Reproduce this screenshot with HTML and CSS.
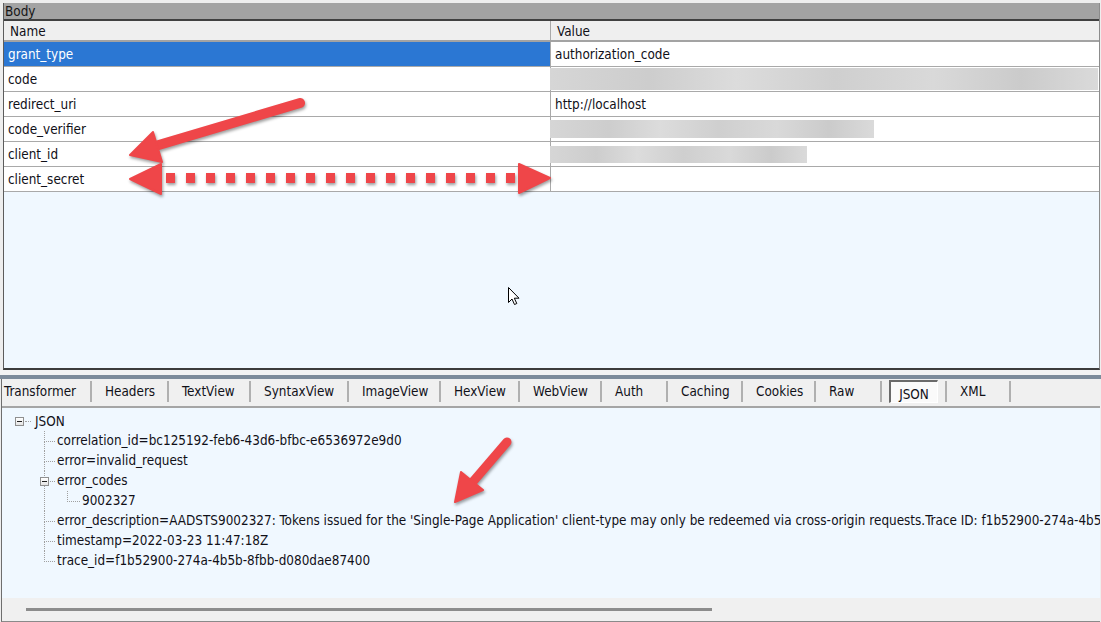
FILE: index.html
```html
<!DOCTYPE html>
<html lang="en">
<head>
  <meta charset="UTF-8">
  <title>Body - JSON inspector</title>
  <link rel="stylesheet" href="styles.css">
</head>
<body>
  <div class="screen">
    <div class="body-panel">
      <div class="panel-title">Body</div>
      <div class="grid">
        <div class="grid-row grid-head"><div class="cell name">Name</div><div class="cell value">Value</div></div>
        <div class="grid-row selected"><div class="cell name">grant_type</div><div class="cell value">authorization_code</div></div>
        <div class="grid-row"><div class="cell name">code</div><div class="cell value hidden"><span class="blur blur-full"></span></div></div>
        <div class="grid-row"><div class="cell name">redirect_uri</div><div class="cell value">http://localhost</div></div>
        <div class="grid-row"><div class="cell name">code_verifier</div><div class="cell value hidden"><span class="blur blur-long"></span></div></div>
        <div class="grid-row"><div class="cell name">client_id</div><div class="cell value hidden"><span class="blur blur-short"></span></div></div>
        <div class="grid-row"><div class="cell name">client_secret</div><div class="cell value"></div></div>
      </div>
      <div class="grid-empty"></div>
    </div>

    <div class="splitter"></div>

    <div class="inspector">
      <div class="tabs">
        <div class="tab first">Transformer</div>
        <div class="tab">Headers</div>
        <div class="tab">TextView</div>
        <div class="tab">SyntaxView</div>
        <div class="tab">ImageView</div>
        <div class="tab">HexView</div>
        <div class="tab">WebView</div>
        <div class="tab">Auth</div>
        <div class="tab">Caching</div>
        <div class="tab">Cookies</div>
        <div class="tab">Raw</div>
        <div class="tab current"><span class="tab-active">JSON</span></div>
        <div class="tab">XML</div>
      </div>

      <div class="tree">
        <div class="tree-root"><span class="toggle"></span><span class="dash"></span>JSON</div>
        <ul class="tree-list">
          <li>correlation_id=bc125192-feb6-43d6-bfbc-e6536972e9d0</li>
          <li>error=invalid_request</li>
          <li class="open"><span class="toggle"></span>error_codes
            <ul class="tree-list sub">
              <li>9002327</li>
            </ul>
          </li>
          <li>error_description=AADSTS9002327: Tokens issued for the 'Single-Page Application' client-type may only be redeemed via cross-origin requests.Trace ID: f1b52900-274a-4b5</li>
          <li>timestamp=2022-03-23 11:47:18Z</li>
          <li>trace_id=f1b52900-274a-4b5b-8fbb-d080dae87400</li>
        </ul>
      </div>

      <div class="hscroll"><div class="thumb"></div></div>
    </div>

    <!-- red annotation arrows + mouse pointer drawn over the screenshot -->
    <svg class="overlay" width="1101" height="622" viewBox="0 0 1101 622">
      <g class="arrow">
        <line x1="300" y1="103" x2="152" y2="147" stroke-width="10" stroke-linecap="round"/>
        <polygon points="130,155 153,132 162,162"/>
      </g>
      <g class="arrow">
        <polygon points="130,179 161,164 161,194"/>
        <line class="dots" x1="166" y1="178" x2="516" y2="178" stroke-width="10"/>
        <polygon points="550,178 519,164 519,193"/>
      </g>
      <g class="arrow">
        <line x1="507" y1="442" x2="471" y2="484" stroke-width="9" stroke-linecap="round"/>
        <polygon points="455,502 461,472 483,490"/>
      </g>
      <path class="pointer" transform="translate(508,287)" d="M0.5 0.5V15.5L4 12L6.5 17.5L8.8 16.5L6.3 11.2H11Z"/>
    </svg>
  </div>
</body>
</html>
```

FILE: styles.css
```css
html, body { margin:0; padding:0; }
body {
  width:1101px; height:622px; overflow:hidden;
  background:#eeeeee;
  font-family: Tahoma, "DejaVu Sans Condensed", "DejaVu Sans", sans-serif;
  font-size:13.4px;
  color:#101018;
}
.screen {
  position:relative;
  height:622px; box-sizing:border-box;
  padding-top:3px;
  display:flex; flex-direction:column;
}

/* top panel: Body grid */
.body-panel {
  margin-left:3px; width:1097px; height:367px; box-sizing:border-box;
  border-left:1px solid #5c5c5c; border-right:1px solid #8c8c8c; border-bottom:2px solid #3c3c3c;
  display:flex; flex-direction:column;
  background:#f0f8ff;
}
.panel-title {
  height:16px; line-height:18px;
  padding-left:1px;
  background:#a3a3a3; color:#161616;
  border-bottom:2px solid #404040;
}
.grid-row {
  display:grid; grid-template-columns:547px 1fr;
  height:24px;
  background:#fff;
  border-bottom:1px solid #a9a9a9;
}
.grid-head { height:19px; background:#efefef; border-bottom:2px solid #a3a3a3; }
.cell {
  display:flex; align-items:center;
  padding:1px 0 0 4px;
  white-space:nowrap; overflow:hidden;
}
.cell.name { box-sizing:border-box; border-right:1px solid #a9a9a9; }
.grid-head .cell { padding-left:6px; }
.selected .name { background:#2b77d3; color:#fff; }
.cell.hidden { padding:0; overflow:visible; }
.blur {
  display:block; margin-left:-1px;
  background:linear-gradient(90deg,#d6d6d6 0%,#cdcdcd 18%,#dcdcdc 34%,#cfcfcf 52%,#d9d9d9 70%,#cbcbcb 86%,#dadada 100%);
  filter:blur(0.6px);
}
.blur-full { width:100%; height:22px; }
.blur-long { width:324px; height:18px; }
.blur-short { width:257px; height:17px; }
.grid-empty { flex:1; }

.splitter { height:5px; background:#f3f3f3; border-bottom:4px solid #7d8b9a; }

/* lower panel: inspector tabs + tree */
.inspector {
  flex:1;
  margin-left:1px; width:1099px; box-sizing:border-box;
  border-left:1px solid #6e6e6e; border-bottom:1px solid #8a8a8a;
  display:flex; flex-direction:column;
}
.tabs {
  height:25px; padding:2px 0 0 1px;
  display:grid;
  grid-template-columns:89px 77px 82px 98px 92px 79px 82px 66px 75px 73px 66px 65px 64px;
  background:#f0f0f0;
  border-bottom:2px solid #a5a5a5;
}
.tab {
  height:21px; line-height:21px;
  padding-left:13px;
  white-space:nowrap; overflow:hidden;
  border-right:2px solid #b0b0b0;
}
.tab.first { padding-left:1px; }
.tab.current { padding-left:7px; overflow:visible; }
.tab-active {
  display:inline-block; box-sizing:border-box;
  width:49px; height:23px; margin-top:-1px;
  line-height:23px; padding-top:1px;
  text-align:center;
  background:#fafafa;
  border-top:2px solid #6a6a6a; border-left:2px solid #6a6a6a;
  border-right:1px solid #fff; border-bottom:1px solid #fff;
  vertical-align:top;
}

.tree {
  height:187px; padding-top:3px;
  background:#f0f8ff;
  overflow:hidden; white-space:nowrap;
}
.tree-root { height:20px; display:flex; align-items:center; padding-left:13px; }
.toggle {
  width:9px; height:9px; box-sizing:border-box;
  border:1px solid #8f8f8f;
  background:linear-gradient(#ffffff,#e4e4e4);
  position:relative;
}
.toggle::after {
  content:''; position:absolute;
  left:1px; top:3px; width:5px; height:1px;
  background:#1f1f1f;
}
.dash { width:6px; margin:0 4px 0 1px; border-top:1px dotted #a0a0a0; }

.tree-list { list-style:none; margin:0 0 0 42px; padding:0; }
.tree-list li { position:relative; padding-left:13px; line-height:20px; }
.tree-list li::before {
  content:''; position:absolute; left:0; top:0;
  width:10px; height:10px;
  border-left:1px dotted #a0a0a0; border-bottom:1px dotted #a0a0a0;
}
.tree-list li:not(:last-child)::after {
  content:''; position:absolute; left:0; top:10px; bottom:0;
  border-left:1px dotted #a0a0a0;
}
.tree-list li.open > .toggle { position:absolute; left:-4px; top:6px; z-index:1; }
.tree-list.sub { margin-left:10px; }
.tree-list.sub li { padding-left:15px; }
.tree-list.sub li::before { width:12px; }

.hscroll { flex:1; background:#f0f0f0; }
.thumb { margin:10px 0 0 24px; width:686px; height:3px; background:#8c8c8c; }

/* annotations */
.overlay { position:absolute; left:0; top:0; pointer-events:none; }
.arrow { fill:#ef4649; stroke:#ef4649; filter:drop-shadow(1px 2px 1.5px rgba(0,0,0,0.38)); }
.arrow polygon { stroke-width:2; stroke-linejoin:round; }
.arrow .dots { stroke-dasharray:9 11; }
.pointer { fill:#fff; stroke:#000; stroke-width:1; stroke-linejoin:miter; }
```
